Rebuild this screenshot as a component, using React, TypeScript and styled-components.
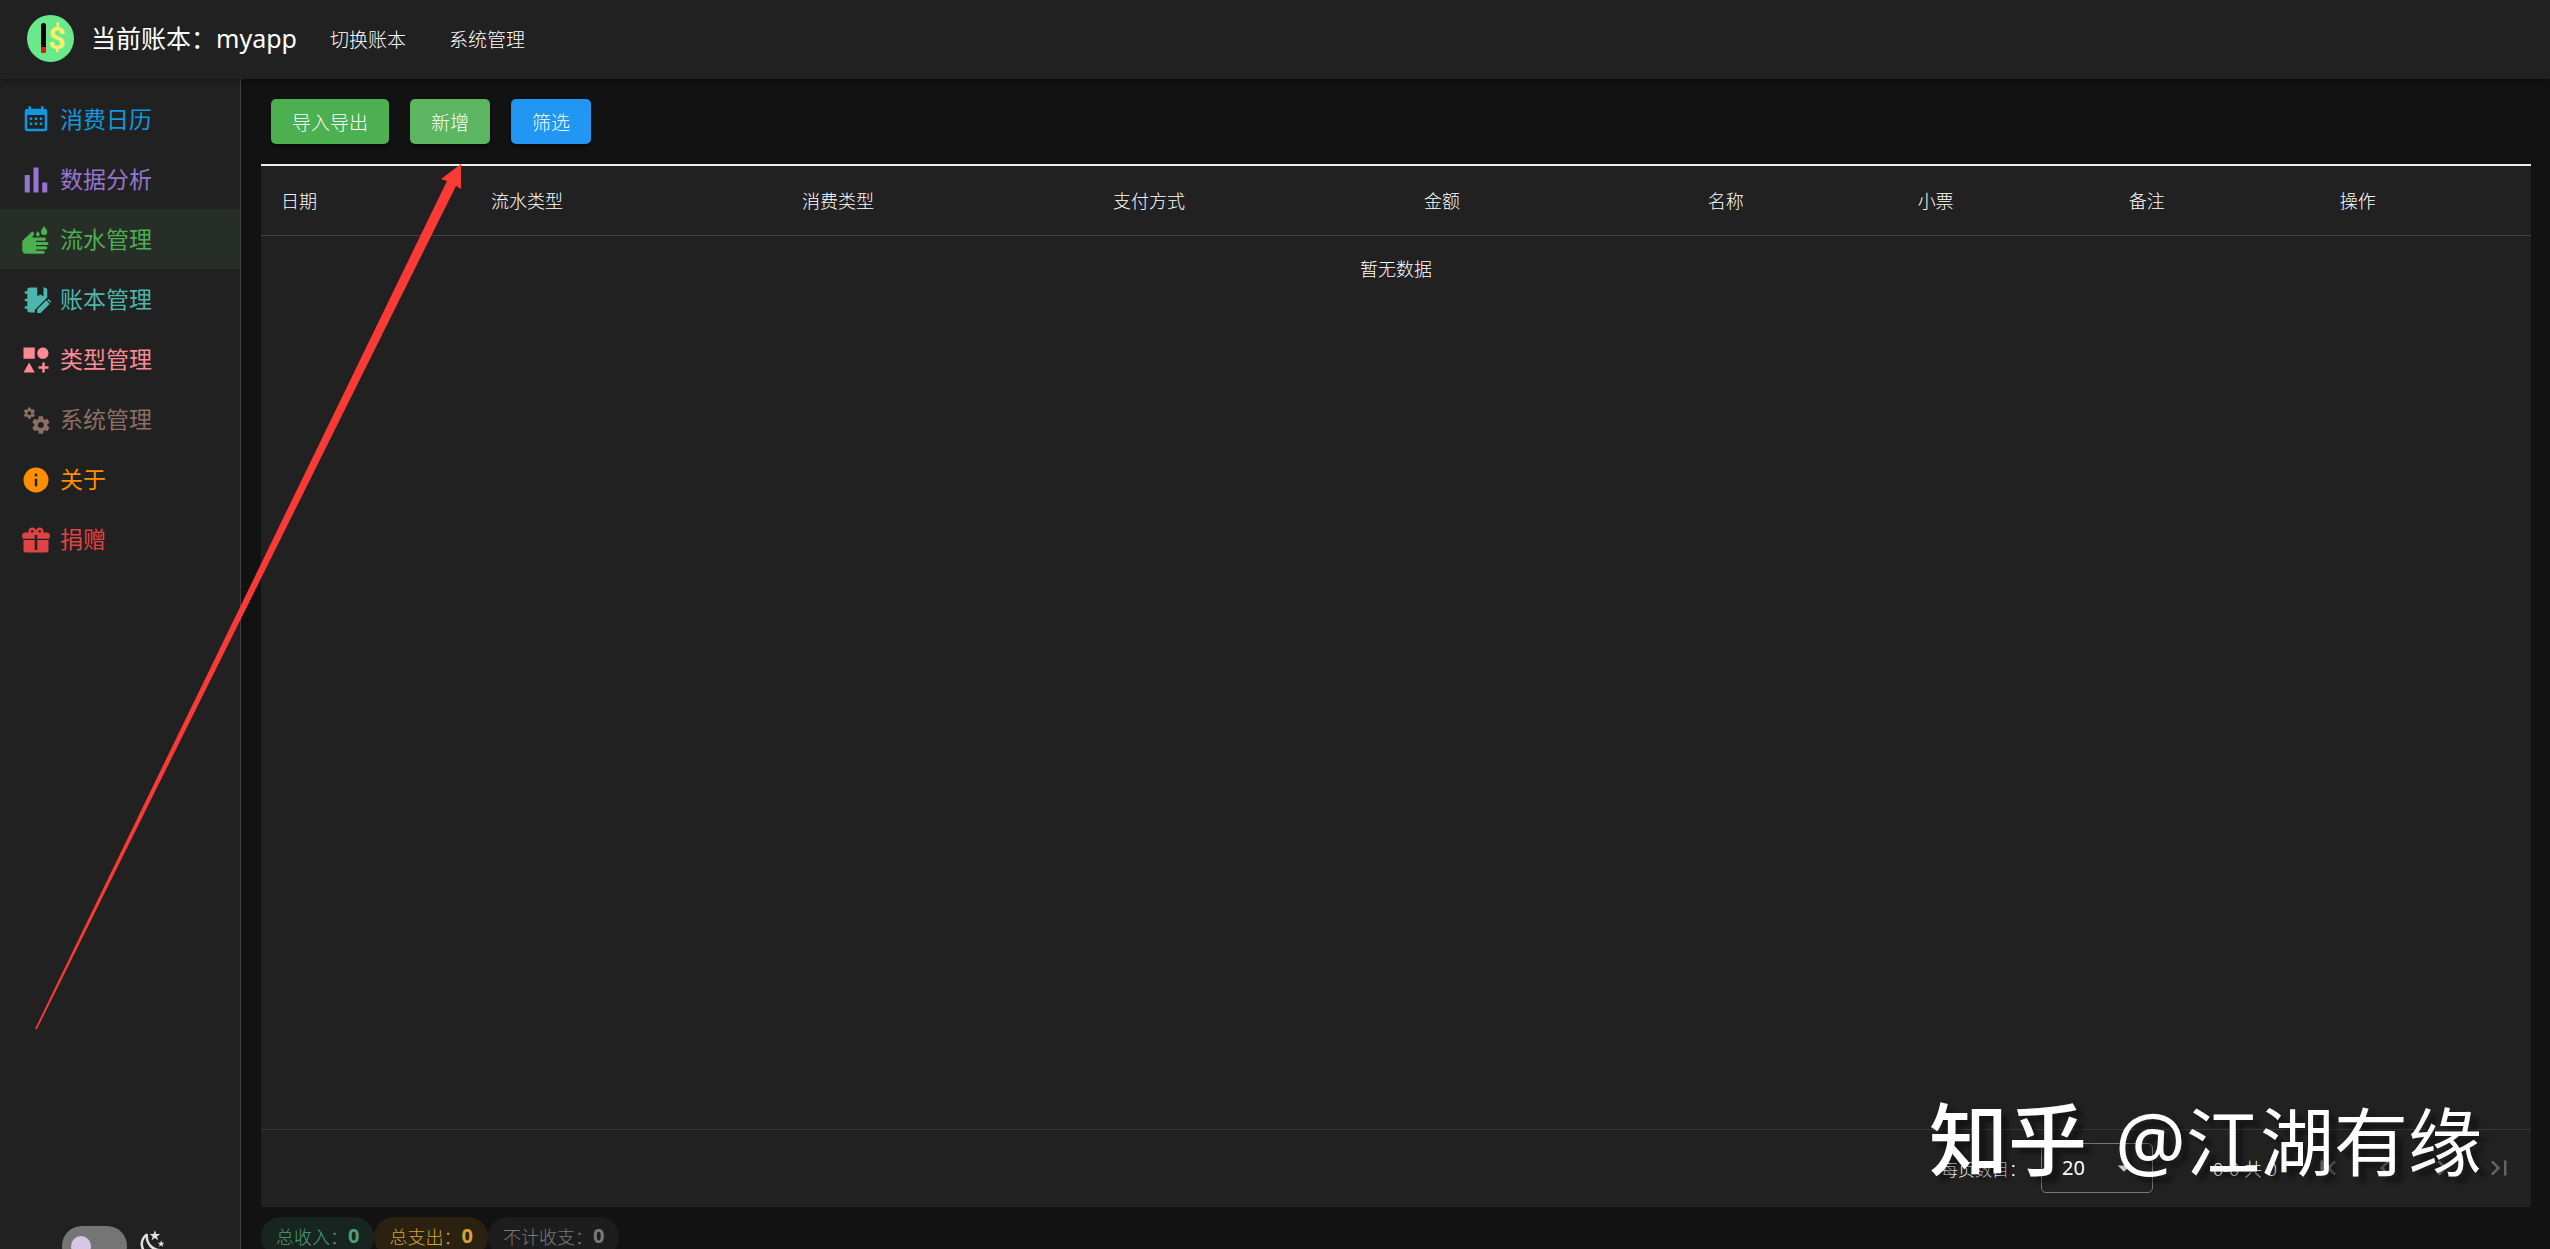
import React from 'react';
import styled, { createGlobalStyle } from 'styled-components';
import { MdWash } from 'react-icons/md';

const GlobalStyle = createGlobalStyle`
  *, *::before, *::after { box-sizing: border-box; }
  body {
    margin: 0;
    background: #121212;
    color: #fff;
    font-family: 'Noto Sans', 'Noto Sans CJK SC', sans-serif;
    font-size: 18px;
  }
  button, select, input { font: inherit; color: inherit; }
`;

const Shell = styled.div`
  position: relative;
  height: 100vh;
  overflow: hidden;
`;

const Header = styled.header`
  position: relative;
  z-index: 1;
  display: flex;
  align-items: center;
  height: 79px;
  padding: 0 27px 2px;
  background: #212121;
  box-shadow: 0 2px 5px rgba(0, 0, 0, 0.35);
`;

const Logo = styled.svg`
  width: 47px;
  height: 47px;
  margin-right: 17px;
`;

const Title = styled.h1`
  margin: 0 13px 0 0;
  padding-bottom: 2px;
  font-size: 25px;
  line-height: 36px;
  font-weight: 400;
  white-space: nowrap;
`;

const TopNav = styled.nav`
  display: flex;
  gap: 3px;
`;

const TopButton = styled.button`
  height: 45px;
  padding: 0 20px;
  border: 0;
  background: transparent;
  font-size: 19px;
  font-weight: 300;
  cursor: pointer;
`;

const Body = styled.div`
  display: flex;
  align-items: stretch;
`;

const Sidebar = styled.aside`
  display: flex;
  flex-direction: column;
  flex: 0 0 241px;
  padding: 10px 0 11px;
  background: #212121;
  border-right: 1px solid #424242;
`;

const SideNav = styled.nav`
  display: flex;
  flex-direction: column;
`;

const SideLink = styled.a<{ $color: string; $active?: boolean }>`
  display: flex;
  align-items: center;
  gap: 9px;
  height: 60px;
  padding: 2px 21px 0;
  color: ${(p) => p.$color};
  background: ${(p) => (p.$active ? '#272d27' : 'transparent')};
  font-size: 23px;
  line-height: 32px;
  font-weight: 400;
  text-decoration: none;

  svg { flex: none; width: 30px; height: 30px; fill: currentColor; }
  span { padding-bottom: 3px; }
`;

const ThemeRow = styled.div`
  display: flex;
  align-items: center;
  gap: 11px;
  margin-top: auto;
  padding-left: 62px;
  color: #e0e0e0;

  svg { width: 30px; height: 30px; fill: currentColor; }
`;

const Switch = styled.input`
  appearance: none;
  display: flex;
  align-items: center;
  width: 65px;
  height: 40px;
  margin: 0;
  padding: 0 9px;
  border-radius: 20px;
  background: #757575;
  cursor: pointer;

  &::before {
    content: '';
    width: 20px;
    height: 20px;
    border-radius: 50%;
    background: #d5c6e2;
  }
  &:checked { justify-content: flex-end; }
`;

const Main = styled.main`
  flex: 1;
  min-width: 0;
  padding: 20px 19px 20px 20px;
`;

const Toolbar = styled.div`
  display: flex;
  gap: 21px;
  padding: 0 10px 20px;
`;

const ActionButton = styled.button<{ $bg: string }>`
  height: 45px;
  padding: 0 21px;
  border: 0;
  border-radius: 5px;
  background: ${(p) => p.$bg};
  box-shadow: 0 3px 3px rgba(0, 0, 0, 0.4);
  font-size: 19px;
  font-weight: 300;
  cursor: pointer;
`;

const Panel = styled.section`
  display: flex;
  flex-direction: column;
  min-height: calc(100vh - 206px);
  background: #212121;
  border-top: 2px solid #ececec;
`;

const Table = styled.table`
  width: 100%;
  table-layout: fixed;
  border-spacing: 0;
  font-weight: 300;
`;

const Th = styled.th`
  height: 70px;
  padding: 0 20px 2px;
  border-bottom: 1px solid #424242;
  font-weight: 300;
  text-align: left;
`;

const EmptyCell = styled.td`
  height: 65px;
  padding: 0 20px 2px;
  text-align: center;
`;

const PanelFooter = styled.footer`
  display: flex;
  align-items: center;
  justify-content: flex-end;
  height: 78px;
  margin-top: auto;
  padding: 0 4px 1px 0;
  border-top: 1px solid #383838;
  font-weight: 300;
`;

const PageLabel = styled.label`
  margin-right: 15px;
  font-size: 17px;
`;

const SelectBox = styled.div`
  position: relative;
  width: 112px;
  margin-right: 60px;

  svg {
    position: absolute;
    top: 10px;
    right: 14px;
    width: 30px;
    height: 30px;
    fill: #c8c8c8;
    pointer-events: none;
  }
`;

const PageSelect = styled.select`
  appearance: none;
  display: block;
  width: 100%;
  height: 50px;
  padding: 0 20px 2px;
  border: 1px solid #767676;
  border-radius: 5px;
  background: transparent;
  font-size: 20px;
  font-weight: 400;
`;

const Range = styled.span`
  margin-right: 22px;
  color: #f0f0f0;
`;

const PageButton = styled.button`
  display: flex;
  align-items: center;
  justify-content: center;
  width: 57px;
  height: 57px;
  padding: 0;
  border: 0;
  background: transparent;
  color: #646464;

  svg { width: 30px; height: 30px; fill: currentColor; }
`;

const Totals = styled.div`
  display: flex;
  padding-top: 10px;
`;

const Chip = styled.span<{ $bg: string; $color: string }>`
  display: flex;
  align-items: center;
  height: 40px;
  padding: 0 15px 3px;
  border-radius: 20px;
  background: ${(p) => p.$bg};
  color: ${(p) => p.$color};
  font-weight: 300;

  strong { font-size: 20px; font-weight: 700; }
`;

const PointerArrow = styled.svg`
  position: absolute;
  z-index: 2;
  left: 36px;
  top: 164px;
  width: 425px;
  height: 865px;
  overflow: visible;
  pointer-events: none;
`;

const Watermark = styled.div`
  position: absolute;
  z-index: 2;
  right: 68px;
  bottom: 57px;
  display: flex;
  align-items: baseline;
  gap: 28px;
  font-family: 'Noto Sans CJK SC', sans-serif;
  font-size: 74px;
  line-height: 104px;
  font-weight: 400;
  white-space: nowrap;
  text-shadow: 7px 6px 4px rgba(0, 0, 0, 0.4);
  pointer-events: none;

  b { font-size: 79px; font-weight: 500; }
  i {
    font-family: 'Noto Sans', sans-serif;
    font-size: 79px;
    font-style: normal;
    font-weight: 400;
  }
`;

const paths = {
  calendar:
    'M9,10V12H7V10H9M13,10V12H11V10H13M17,10V12H15V10H17M19,3A2,2 0 0,1 21,5V19A2,2 0 0,1 19,21H5C3.89,21 3,20.1 3,19V5A2,2 0 0,1 5,3H6V1H8V3H16V1H18V3H19M19,19V8H5V19H19M9,14V16H7V14H9M13,14V16H11V14H13M17,14V16H15V14H17Z',
  poll: 'M3,22V8H7V22H3M10,22V2H14V22H10M17,22V14H21V22H17Z',
  notebook:
    'M3,7V5H5V4C5,2.89 5.9,2 7,2H13V9L15.5,7.5L18,9V2H19C20.05,2 21,2.95 21,4V10L11,20V22H7C5.95,22 5,21.05 5,20V19H3V17H5V13H3V11H5V7H3M20.2,12.2L13,19.4V22.3H15.7L22.9,15.1L20.2,12.2M22.1,11.1L21,12.2L23.7,14.3L24,13.2Z',
  shapes:
    'M2,2H11V11H2V2M17.5,2C20,2 22,4 22,6.5C22,9 20,11 17.5,11C15,11 13,9 13,6.5C13,4 15,2 17.5,2M6.5,14L11,22H2L6.5,14M19,17H22V19H19V22H17V19H14V17H17V14H19V17Z',
  cogs:
    'M15.9,18.45C17.25,18.45 18.35,17.35 18.35,16C18.35,14.65 17.25,13.55 15.9,13.55C14.54,13.55 13.45,14.65 13.45,16C13.45,17.35 14.54,18.45 15.9,18.45M21.1,16.68L22.58,17.84C22.71,17.95 22.75,18.13 22.66,18.29L21.26,20.71C21.17,20.86 21,20.92 20.83,20.86L19.09,20.16C18.73,20.44 18.33,20.67 17.91,20.85L17.64,22.7C17.62,22.87 17.47,23 17.3,23H14.5C14.32,23 14.18,22.87 14.15,22.7L13.89,20.85C13.46,20.67 13.07,20.44 12.71,20.16L10.96,20.86C10.81,20.92 10.62,20.86 10.54,20.71L9.14,18.29C9.05,18.13 9.09,17.95 9.22,17.84L10.7,16.68L10.65,16L10.7,15.31L9.22,14.16C9.09,14.05 9.05,13.86 9.14,13.71L10.54,11.29C10.62,11.13 10.81,11.07 10.96,11.13L12.71,11.84C13.07,11.56 13.46,11.32 13.89,11.15L14.15,9.29C14.18,9.13 14.32,9 14.5,9H17.3C17.47,9 17.62,9.13 17.64,9.29L17.91,11.15C18.33,11.32 18.73,11.56 19.09,11.84L20.83,11.13C21,11.07 21.17,11.13 21.26,11.29L22.66,13.71C22.75,13.86 22.71,14.05 22.58,14.16L21.1,15.31L21.15,16L21.1,16.68M6.69,8.07C7.56,8.07 8.26,7.37 8.26,6.5C8.26,5.63 7.56,4.92 6.69,4.92A1.58,1.58 0 0,0 5.11,6.5C5.11,7.37 5.82,8.07 6.69,8.07M10.03,6.94L11,7.68C11.07,7.75 11.09,7.87 11.03,7.97L10.13,9.53C10.08,9.63 9.96,9.67 9.86,9.63L8.74,9.18L8,9.62L7.81,10.81C7.79,10.92 7.7,11 7.59,11H5.79C5.67,11 5.58,10.92 5.56,10.81L5.4,9.62L4.64,9.18L3.52,9.63C3.41,9.67 3.3,9.63 3.24,9.53L2.34,7.97C2.28,7.87 2.31,7.75 2.39,7.68L3.34,6.94L3.31,6.5L3.34,6.06L2.39,5.32C2.31,5.25 2.28,5.13 2.34,5.03L3.24,3.47C3.3,3.37 3.41,3.33 3.52,3.37L4.64,3.82L5.4,3.38L5.56,2.19C5.58,2.08 5.67,2 5.79,2H7.59C7.7,2 7.79,2.08 7.81,2.19L8,3.38L8.74,3.82L9.86,3.37C9.96,3.33 10.08,3.37 10.13,3.47L11.03,5.03C11.09,5.13 11.07,5.25 11,5.32L10.03,6.06L10.06,6.5L10.03,6.94Z',
  info: 'M13,9H11V7H13M13,17H11V11H13M12,2A10,10 0 0,0 2,12A10,10 0 0,0 12,22A10,10 0 0,0 22,12A10,10 0 0,0 12,2Z',
  gift: 'M9.06,1.93C7.17,1.92 5.33,3.74 6.17,6H3A2,2 0 0,0 1,8V10A1,1 0 0,0 2,11H11V8H13V11H22A1,1 0 0,0 23,10V8A2,2 0 0,0 21,6H17.83C19,2.73 14.6,.42 12.57,3.24L12,4L11.43,3.22C10.8,2.33 9.93,1.94 9.06,1.93M9,4C9.89,4 10.34,5.08 9.71,5.71C9.08,6.34 8,5.89 8,5A1,1 0 0,1 9,4M15,4C15.89,4 16.34,5.08 15.71,5.71C15.08,6.34 14,5.89 14,5A1,1 0 0,1 15,4M2,12V20A2,2 0 0,0 4,22H20A2,2 0 0,0 22,20V12H13V20H11V12H2Z',
  night:
    'M17.75,4.09L15.22,6.03L16.13,9.09L13.5,7.28L10.87,9.09L11.78,6.03L9.25,4.09L12.44,4L13.5,1L14.56,4L17.75,4.09M21.25,11L19.61,12.25L20.2,14.23L18.5,13.06L16.8,14.23L17.39,12.25L15.75,11L17.81,10.95L18.5,9L19.19,10.95L21.25,11M18.97,15.95C19.8,15.87 20.69,17.05 20.16,17.8C19.84,18.25 19.5,18.67 19.08,19.07C15.17,23 8.84,23 4.94,19.07C1.03,15.17 1.03,8.83 4.94,4.93C5.34,4.53 5.76,4.17 6.21,3.85C6.96,3.32 8.14,4.21 8.06,5.04C7.79,7.9 8.75,10.87 10.95,13.06C13.14,15.26 16.1,16.22 18.97,15.95M17.33,17.97C14.5,17.81 11.7,16.64 9.53,14.5C7.36,12.31 6.2,9.5 6.04,6.68C3.23,9.82 3.34,14.64 6.35,17.66C9.37,20.67 14.19,20.78 17.33,17.97Z',
  menuDown: 'M7,10L12,15L17,10H7Z',
  first: 'M18.41,16.59L13.82,12L18.41,7.41L17,6L11,12L17,18L18.41,16.59M6,6H8V18H6V6Z',
  prev: 'M15.41,16.58L10.83,12L15.41,7.41L14,6L8,12L14,18L15.41,16.58Z',
  next: 'M8.59,16.58L13.17,12L8.59,7.41L10,6L16,12L10,18L8.59,16.58Z',
  last: 'M5.59,7.41L10.18,12L5.59,16.59L7,18L13,12L7,6L5.59,7.41M16,6H18V18H16V6Z',
};

const Icon = ({ name }: { name: keyof typeof paths }) => (
  <svg viewBox="0 0 24 24" aria-hidden="true">
    <path d={paths[name]} />
  </svg>
);

const menu = [
  { label: '消费日历', color: '#1197df', icon: <Icon name="calendar" /> },
  { label: '数据分析', color: '#9575cd', icon: <Icon name="poll" /> },
  { label: '流水管理', color: '#4caf50', icon: <MdWash />, active: true },
  { label: '账本管理', color: '#4db6ac', icon: <Icon name="notebook" /> },
  { label: '类型管理', color: '#ff8a93', icon: <Icon name="shapes" /> },
  { label: '系统管理', color: '#8d6e63', icon: <Icon name="cogs" /> },
  { label: '关于', color: '#ff8f00', icon: <Icon name="info" /> },
  { label: '捐赠', color: '#e04343', icon: <Icon name="gift" /> },
];

const columns = [
  { label: '日期', width: '9.25%' },
  { label: '流水类型', width: '13.7%' },
  { label: '消费类型', width: '13.7%' },
  { label: '支付方式', width: '13.7%' },
  { label: '金额', width: '12.5%' },
  { label: '名称', width: '9.25%' },
  { label: '小票', width: '9.3%' },
  { label: '备注', width: '9.3%' },
  { label: '操作', width: '9.3%' },
];

const totals = [
  { label: '总收入：', value: 0, bg: '#17241f', color: '#4f9c7c' },
  { label: '总支出：', value: 0, bg: '#2b2111', color: '#d9a52b' },
  { label: '不计收支：', value: 0, bg: '#1d1d1d', color: '#7a7a7a' },
];

const pager = [
  { name: 'first', label: '第一页' },
  { name: 'prev', label: '上一页' },
  { name: 'next', label: '下一页' },
  { name: 'last', label: '最后一页' },
] as const;

export default function App() {
  return (
    <Shell>
      <GlobalStyle />
      <Header>
        <Logo viewBox="0 0 47 47" aria-hidden="true">
          <circle cx="23.5" cy="23.5" r="23.5" fill="#69e98b" />
          <rect x="14" y="8" width="5" height="30" rx="2.5" fill="#000" />
          <path d="M14,32H19V35.500A2.500,2.500 0 0,1 14,35.500Z" fill="#e8141c" />
          <text x="30" y="34" textAnchor="middle" fontFamily="Roboto, sans-serif" fontSize="31" fontWeight="700" fill="#f7f06a">
            $
          </text>
        </Logo>
        <Title>当前账本：myapp</Title>
        <TopNav>
          <TopButton type="button">切换账本</TopButton>
          <TopButton type="button">系统管理</TopButton>
        </TopNav>
      </Header>
      <Body>
        <Sidebar>
          <SideNav>
            {menu.map((item) => (
              <SideLink key={item.label} href="#" $color={item.color} $active={item.active}>
                {item.icon}
                <span>{item.label}</span>
              </SideLink>
            ))}
          </SideNav>
          <ThemeRow>
            <Switch type="checkbox" id="theme" aria-label="深色模式" />
            <label htmlFor="theme">
              <Icon name="night" />
            </label>
          </ThemeRow>
        </Sidebar>
        <Main>
          <Toolbar>
            <ActionButton type="button" $bg="#4caf50">导入导出</ActionButton>
            <ActionButton type="button" $bg="#5cb560">新增</ActionButton>
            <ActionButton type="button" $bg="#2196f3">筛选</ActionButton>
          </Toolbar>
          <Panel>
            <Table>
              <colgroup>
                {columns.map((c) => (
                  <col key={c.label} width={c.width} />
                ))}
              </colgroup>
              <thead>
                <tr>
                  {columns.map((c) => (
                    <Th key={c.label} scope="col">{c.label}</Th>
                  ))}
                </tr>
              </thead>
              <tbody>
                <tr>
                  <EmptyCell colSpan={columns.length}>暂无数据</EmptyCell>
                </tr>
              </tbody>
            </Table>
            <PanelFooter>
              <PageLabel htmlFor="page-size">每页数目：</PageLabel>
              <SelectBox>
                <PageSelect id="page-size" defaultValue="20">
                  <option value="20">20</option>
                </PageSelect>
                <Icon name="menuDown" />
              </SelectBox>
              <Range>0-0 共 0</Range>
              {pager.map((p) => (
                <PageButton key={p.name} type="button" disabled aria-label={p.label}>
                  <Icon name={p.name} />
                </PageButton>
              ))}
            </PanelFooter>
          </Panel>
          <Totals>
            {totals.map((t) => (
              <Chip key={t.label} $bg={t.bg} $color={t.color}>
                {t.label}
                <strong>{t.value}</strong>
              </Chip>
            ))}
          </Totals>
        </Main>
      </Body>
      <PointerArrow viewBox="0 0 425 865" aria-hidden="true">
        <path d="M-1,865L411,17L405,15L425,0V25L420,22L1,865Z" fill="#fb3a36" />
      </PointerArrow>
      <Watermark>
        <b>知乎</b>
        <span>
          <i>@</i>江湖有缘
        </span>
      </Watermark>
    </Shell>
  );
}
